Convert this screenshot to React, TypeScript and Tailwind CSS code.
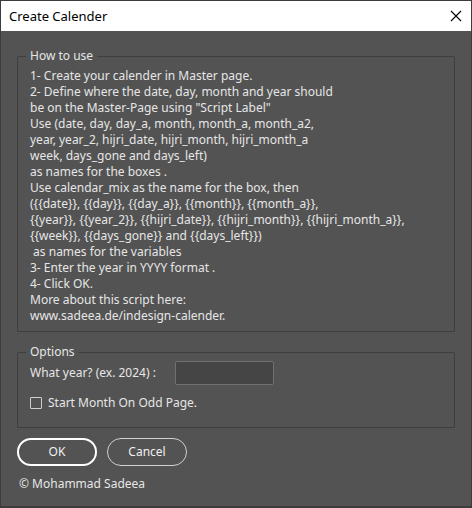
import React from "react";

const lines = [
  "1- Create your calender in Master page.",
  "2- Define where the date, day, month and year should",
  'be on the Master-Page using "Script Label"',
  "Use (date, day, day_a, month, month_a, month_a2,",
  "year, year_2, hijri_date, hijri_month, hijri_month_a",
  "week, days_gone and days_left)",
  "as names for the boxes .",
  "Use calendar_mix as the name for the box, then",
  "({{date}}, {{day}}, {{day_a}}, {{month}}, {{month_a}},",
  "{{year}}, {{year_2}}, {{hijri_date}}, {{hijri_month}}, {{hijri_month_a}},",
  "{{week}}, {{days_gone}} and {{days_left}})",
  " as names for the variables",
  "3- Enter the year in YYYY format .",
  "4- Click OK.",
  "More about this script here:",
  "www.sadeea.de/indesign-calender.",
];

export default function App() {
  return (
    <div
      className="w-[472px] h-[508px] bg-[#3c3c3c] pl-[1px] pt-[1px] pr-[1px] pb-[2px]"
      style={{ fontFamily: '"Noto Sans", "Open Sans", sans-serif' }}
    >
      <div className="w-full h-full flex flex-col bg-[#535353]">
        <div className="h-[30px] bg-white flex items-center justify-between pl-[8px] pr-[9px] shrink-0">
          <span className="text-[13px] text-black leading-none">Create Calender</span>
          <svg width="12" height="12" viewBox="0 0 12 12">
            <path d="M1 1L11 11M11 1L1 11" stroke="#000" strokeWidth="1.1" />
          </svg>
        </div>
        <div className="flex flex-col pl-[16px] text-[12px] text-[#e6e6e6]">
          <fieldset className="mt-[17px] w-[438px] border border-[#3e3e3e] rounded-[2px] pl-[8px] pr-[8px] pb-[7px]">
            <legend className="px-[4px] leading-[16px]">How to use</legend>
            <div className="pl-[4px] pt-[4px] leading-[16px] whitespace-pre">
              {lines.map((l, i) => (
                <div key={i}>{l}</div>
              ))}
            </div>
          </fieldset>
          <fieldset className="mt-[12px] w-[438px] border border-[#3e3e3e] rounded-[2px] pl-[8px] pr-[8px] pb-[16px]">
            <legend className="px-[4px] leading-[16px]">Options</legend>
            <div className="pl-[4px] pt-[1px] flex flex-col">
              <div className="flex items-center h-[24px]">
                <span className="w-[145px] leading-[16px]">What year? (ex. 2024) :</span>
                <input
                  className="w-[99px] h-[24px] bg-[#454545] border border-[#707070] rounded-[2px] outline-none text-[#e6e6e6] px-1"
                  type="text"
                />
              </div>
              <label className="flex items-center mt-[10px] h-[16px]">
                <span className="w-[12px] h-[12px] border border-[#cfcfcf] rounded-[1px]" />
                <span className="ml-[6px] leading-[16px]">Start Month On Odd Page.</span>
              </label>
            </div>
          </fieldset>
          <div className="flex gap-[10px] mt-[10px]">
            <button className="w-[80px] h-[28px] rounded-full border-2 border-white text-[#f0f0f0] leading-none">
              OK
            </button>
            <button className="w-[80px] h-[28px] rounded-full border border-[#d0d0d0] text-[#f0f0f0] leading-none">
              Cancel
            </button>
          </div>
          <div className="mt-[10px] pl-[2px] leading-[16px]">© Mohammad Sadeea</div>
        </div>
      </div>
    </div>
  );
}
